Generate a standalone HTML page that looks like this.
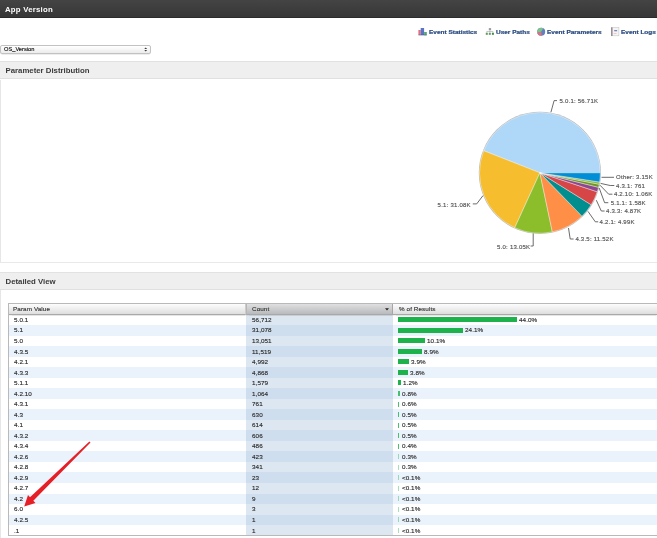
<!DOCTYPE html>
<html><head><meta charset="utf-8"><title>App Version</title>
<style>
html,body{margin:0;padding:0;background:#fff;}
body{width:657px;height:538px;position:relative;overflow:hidden;font-family:"Liberation Sans",sans-serif;color:#333;}
.abs{position:absolute;}
.hdr{position:absolute;left:0;top:0;width:657px;height:17.5px;background:linear-gradient(#444444,#373737);border-bottom:1px solid #2b2b2b;box-sizing:border-box;}
.hdr span{position:absolute;left:5px;top:4.6px;font-size:7.8px;font-weight:bold;color:#fff;letter-spacing:0.22px;line-height:10px;will-change:opacity;opacity:0.999;}
.lnk{position:absolute;top:28.15px;font-size:6.0px;font-weight:bold;color:#28497f;-webkit-text-stroke:0.22px #28497f;line-height:8px;white-space:nowrap;transform:scaleX(1.078);transform-origin:0 0;}
.sel{position:absolute;left:-0.2px;top:44.9px;width:150.9px;height:9.3px;border:0.6px solid #c2c2c2;border-radius:2px;box-sizing:border-box;background:linear-gradient(#ffffff,#ececec);box-shadow:0 0.5px 0.5px rgba(0,0,0,0.15);}
.sel span{position:absolute;left:3.2px;top:0.5px;font-size:5.7px;line-height:7px;color:#111;-webkit-text-stroke:0.15px #111;}
.ph{position:absolute;left:0;width:657px;background:#efefef;border-top:1px solid #e2e2e2;border-bottom:1px solid #e0e0e0;box-sizing:border-box;}
.ph span{position:absolute;left:5.5px;font-size:7.8px;font-weight:bold;color:#3a3a3a;line-height:10px;white-space:nowrap;}
.row{position:absolute;left:8.5px;width:649px;overflow:hidden;}
.sc{position:absolute;left:237.5px;top:0;width:146.5px;height:100%;}
.row span{position:absolute;top:2.45px;font-size:5.8px;line-height:7px;color:#2b2b2b;white-space:nowrap;-webkit-text-stroke:0.13px #2b2b2b;letter-spacing:0.05px;transform:scaleX(1.09);transform-origin:0 0;}
.c1{left:5.2px;}
.c2{left:243.2px;}
.c3{margin-left:-8.5px;}
.bar{position:absolute;left:389.5px;top:2.8px;height:5px;background:#1db24b;}
.th{position:absolute;top:303.3px;height:11.8px;z-index:2;box-sizing:border-box;border-bottom:1px solid #a9a9a9;border-top:1px solid #d8d8d8;box-shadow:0 0.8px 1px rgba(0,0,0,0.10);font-size:5.8px;color:#333;}
.th span{position:absolute;top:2.2px;line-height:7px;white-space:nowrap;-webkit-text-stroke:0.13px #333;letter-spacing:0.08px;transform:scaleX(1.09);transform-origin:0 0;}
#pg{position:absolute;left:0;top:0;width:657px;height:538px;will-change:opacity;opacity:0.999;}
</style></head><body><div id="pg">
<div class="hdr"><span>App Version</span></div>

<!-- links -->
<div class="lnk" style="left:428.7px">Event Statistics</div>
<div class="lnk" style="left:495.5px">User Paths</div>
<div class="lnk" style="left:547.3px">Event Parameters</div>
<div class="lnk" style="left:620.5px">Event Logs</div>
<svg class="abs" style="left:0;top:0" width="657" height="60" viewBox="0 0 657 60">
 <!-- chart icon -->
 <rect x="418.4" y="30" width="2.3" height="5" fill="#e2707c"/><rect x="420.7" y="28" width="3.4" height="7" fill="#5c74c4"/><rect x="424.1" y="32" width="2.7" height="3.2" fill="#58a67c"/><rect x="418.4" y="34.6" width="8.4" height="0.9" fill="#3a4a78" opacity="0.55"/>
 <!-- tree icon -->
 <rect x="488.8" y="28.1" width="2.3" height="2" fill="#9a9aa2"/><rect x="485.8" y="32.8" width="2" height="2" fill="#5c9c5c"/><rect x="488.8" y="32.8" width="2" height="2" fill="#5c9c5c"/><rect x="491.9" y="32.8" width="2" height="2" fill="#3f8a4a"/><path d="M489.9,30.1V32.8M486.8,32.8V31.4H492.9V32.8" stroke="#a0a0a4" stroke-width="0.6" fill="none"/>
 <!-- pie icon -->
 <circle cx="541.2" cy="31.8" r="4" fill="#6480bc"/><path d="M541.2,31.8 L543.2,28.3 A4,4 0 0 0 537.3,32.6 Z" fill="#7cc488"/><path d="M541.2,31.8 L537.3,32.6 A4,4 0 0 0 541.9,35.7 Z" fill="#d47480"/>
 <!-- log icon -->
 <rect x="611.3" y="27.6" width="7.6" height="8.2" fill="#f4f3f5" stroke="#c9c6c6" stroke-width="0.6"/><rect x="611" y="27.4" width="1.6" height="8.6" fill="#9a9091"/><rect x="614.2" y="30" width="2.9" height="1.3" fill="#7c86b4"/><rect x="613.7" y="33" width="2.8" height="0.9" fill="#efc4c8"/>
</svg>

<!-- select -->
<div class="sel"><span>OS_Version</span>
<svg class="abs" style="right:2px;top:1.6px" width="3.4" height="5" viewBox="0 0 4 6"><path d="M0.3,2.5 L2,0.5 L3.7,2.5 Z M0.3,3.5 L2,5.5 L3.7,3.5 Z" fill="#3a3a3a"/></svg></div>

<!-- panel 1 -->
<div class="ph" style="top:61.2px;height:18.2px"><span style="top:3.9px">Parameter Distribution</span></div>
<div class="abs" style="left:0;top:79.5px;width:657px;height:183px;border-left:1px solid #e6e6e6;border-bottom:1px solid #e9e9e9;box-sizing:border-box;"></div>

<svg class="abs" style="left:0;top:0" width="657" height="270" viewBox="0 0 657 270" font-family="Liberation Sans, sans-serif">
<circle cx="539.9" cy="172.8" r="61.1" fill="#b5b5b5"/>
<path d="M539.9,172.8 L600.30,172.80 A60.4,60.4 0 0 0 483.69,150.71 Z" fill="#AFD8F8" stroke="#ffffff" stroke-width="0.5" stroke-opacity="0.8"/>
<path d="M539.9,172.8 L483.69,150.71 A60.4,60.4 0 0 0 514.78,227.73 Z" fill="#F6BE2E" stroke="#ffffff" stroke-width="0.5" stroke-opacity="0.8"/>
<path d="M539.9,172.8 L514.78,227.73 A60.4,60.4 0 0 0 552.37,231.90 Z" fill="#8CBD2A" stroke="#ffffff" stroke-width="0.5" stroke-opacity="0.8"/>
<path d="M539.9,172.8 L552.37,231.90 A60.4,60.4 0 0 0 581.94,216.17 Z" fill="#FF8E46" stroke="#ffffff" stroke-width="0.5" stroke-opacity="0.8"/>
<path d="M539.9,172.8 L581.94,216.17 A60.4,60.4 0 0 0 591.16,204.75 Z" fill="#008E8E" stroke="#ffffff" stroke-width="0.5" stroke-opacity="0.8"/>
<path d="M539.9,172.8 L591.16,204.75 A60.4,60.4 0 0 0 597.24,191.79 Z" fill="#D64646" stroke="#ffffff" stroke-width="0.5" stroke-opacity="0.8"/>
<path d="M539.9,172.8 L597.24,191.79 A60.4,60.4 0 0 0 598.53,187.32 Z" fill="#8E468E" stroke="#ffffff" stroke-width="0.5" stroke-opacity="0.8"/>
<path d="M539.9,172.8 L598.53,187.32 A60.4,60.4 0 0 0 599.20,184.26 Z" fill="#6E9526" stroke="#ffffff" stroke-width="0.5" stroke-opacity="0.8"/>
<path d="M539.9,172.8 L599.20,184.26 A60.4,60.4 0 0 0 599.59,182.05 Z" fill="#8BBA3C" stroke="#ffffff" stroke-width="0.5" stroke-opacity="0.8"/>
<path d="M539.9,172.8 L599.59,182.05 A60.4,60.4 0 0 0 600.30,172.80 Z" fill="#008ED6" stroke="#ffffff" stroke-width="0.5" stroke-opacity="0.8"/>
<g fill="none" stroke="#5a5a5a" stroke-width="0.9">
<path d="M550.9,112.3 L554.1,100.6 H557"/>
<path d="M601.5,177.3 H614"/>
<path d="M600.6,183.4 L610.2,185.5 H614.3"/>
<path d="M600,185.2 L608.7,194.2 H612.4"/>
<path d="M599.2,188 L604.6,202.7 H608.3"/>
<path d="M596.3,200.2 L601.3,211 H604.6"/>
<path d="M588,211.4 L595.3,221.8 H598.2"/>
<path d="M568.5,228 L570.2,239 H573.6"/>
<path d="M533.2,233.4 V246 H530.6"/>
<path d="M483,195.6 L476.7,203.9 H472.8"/>
</g>
<g font-size="6.0" fill="#555" stroke="#555" stroke-width="0.15" letter-spacing="0.23">
<text x="559.5" y="102.8">5.0.1: 56.71K</text>
<text x="616.1" y="179.1">Other: 3.15K</text>
<text x="616.1" y="187.5">4.3.1: 761</text>
<text x="613.9" y="196.0">4.2.10: 1.06K</text>
<text x="610.7" y="204.8">5.1.1: 1.58K</text>
<text x="606.1" y="213.1">4.3.3: 4.87K</text>
<text x="599.6" y="223.9">4.2.1: 4.99K</text>
<text x="575.4" y="241.4">4.3.5: 11.52K</text>
<text x="530.3" y="249.0" text-anchor="end">5.0: 13.05K</text>
<text x="470.8" y="206.8" text-anchor="end">5.1: 31.08K</text>
</g>
</svg>

<!-- panel 2 -->
<div class="ph" style="top:272px;height:18px"><span style="top:3.9px">Detailed View</span></div>
<div class="abs" style="left:0;top:290px;width:1px;height:248px;background:#e6e6e6"></div>

<!-- table -->
<div class="th" style="left:8.5px;width:237.5px;background:linear-gradient(#fdfdfd,#dedede);border-right:1px solid #cfcfcf;"><span style="left:4.9px">Param Value</span></div>
<div class="th" style="left:246px;width:146.5px;background:linear-gradient(#dfdfe0,#b9babc);border-right:1px solid #a9a9a9;border-left:1px solid #b5b5b5;"><span style="left:4.6px">Count</span>
<svg class="abs" style="right:3px;top:4px" width="4" height="3" viewBox="0 0 4 3"><path d="M0,0.3 H4 L2,2.6 Z" fill="#222"/></svg></div>
<div class="th" style="left:392.5px;width:264.5px;background:linear-gradient(#fdfdfd,#dedede);"><span style="left:6px">% of Results</span></div>
<div class="row" style="top:314.50px;height:10.58px;background:#ffffff"><div class="sc" style="background:#dde7f2"></div><span class="c1">5.0.1</span><span class="c2">56,712</span>
<div class="bar" style="width:118.6px;opacity:1"></div><span class="c3" style="left:518.6px">44.0%</span></div>
<div class="row" style="top:325.03px;height:10.58px;background:#eaf2fb"><div class="sc" style="background:#cfdeee"></div><span class="c1">5.1</span><span class="c2">31,078</span>
<div class="bar" style="width:64.9px;opacity:1"></div><span class="c3" style="left:464.9px">24.1%</span></div>
<div class="row" style="top:335.56px;height:10.58px;background:#ffffff"><div class="sc" style="background:#dde7f2"></div><span class="c1">5.0</span><span class="c2">13,051</span>
<div class="bar" style="width:27.2px;opacity:1"></div><span class="c3" style="left:427.2px">10.1%</span></div>
<div class="row" style="top:346.09px;height:10.58px;background:#eaf2fb"><div class="sc" style="background:#cfdeee"></div><span class="c1">4.3.5</span><span class="c2">11,519</span>
<div class="bar" style="width:24.0px;opacity:1"></div><span class="c3" style="left:424.0px">8.9%</span></div>
<div class="row" style="top:356.62px;height:10.58px;background:#ffffff"><div class="sc" style="background:#dde7f2"></div><span class="c1">4.2.1</span><span class="c2">4,992</span>
<div class="bar" style="width:10.5px;opacity:1"></div><span class="c3" style="left:410.5px">3.9%</span></div>
<div class="row" style="top:367.15px;height:10.58px;background:#eaf2fb"><div class="sc" style="background:#cfdeee"></div><span class="c1">4.3.3</span><span class="c2">4,868</span>
<div class="bar" style="width:10.2px;opacity:1"></div><span class="c3" style="left:410.2px">3.8%</span></div>
<div class="row" style="top:377.68px;height:10.58px;background:#ffffff"><div class="sc" style="background:#dde7f2"></div><span class="c1">5.1.1</span><span class="c2">1,579</span>
<div class="bar" style="width:3.2px;opacity:1"></div><span class="c3" style="left:403.2px">1.2%</span></div>
<div class="row" style="top:388.21px;height:10.58px;background:#eaf2fb"><div class="sc" style="background:#cfdeee"></div><span class="c1">4.2.10</span><span class="c2">1,064</span>
<div class="bar" style="width:1.7px;opacity:0.8"></div><span class="c3" style="left:402.3px">0.8%</span></div>
<div class="row" style="top:398.74px;height:10.58px;background:#ffffff"><div class="sc" style="background:#dde7f2"></div><span class="c1">4.3.1</span><span class="c2">761</span>
<div class="bar" style="width:1.3px;opacity:0.8"></div><span class="c3" style="left:401.9px">0.6%</span></div>
<div class="row" style="top:409.27px;height:10.58px;background:#eaf2fb"><div class="sc" style="background:#cfdeee"></div><span class="c1">4.3</span><span class="c2">630</span>
<div class="bar" style="width:1.1px;opacity:0.8"></div><span class="c3" style="left:401.7px">0.5%</span></div>
<div class="row" style="top:419.80px;height:10.58px;background:#ffffff"><div class="sc" style="background:#dde7f2"></div><span class="c1">4.1</span><span class="c2">614</span>
<div class="bar" style="width:1.1px;opacity:0.8"></div><span class="c3" style="left:401.7px">0.5%</span></div>
<div class="row" style="top:430.33px;height:10.58px;background:#eaf2fb"><div class="sc" style="background:#cfdeee"></div><span class="c1">4.3.2</span><span class="c2">606</span>
<div class="bar" style="width:1.1px;opacity:0.8"></div><span class="c3" style="left:401.7px">0.5%</span></div>
<div class="row" style="top:440.86px;height:10.58px;background:#ffffff"><div class="sc" style="background:#dde7f2"></div><span class="c1">4.3.4</span><span class="c2">486</span>
<div class="bar" style="width:0.9px;opacity:0.8"></div><span class="c3" style="left:401.5px">0.4%</span></div>
<div class="row" style="top:451.39px;height:10.58px;background:#eaf2fb"><div class="sc" style="background:#cfdeee"></div><span class="c1">4.2.6</span><span class="c2">423</span>
<div class="bar" style="width:0.9px;opacity:0.4"></div><span class="c3" style="left:401.5px">0.3%</span></div>
<div class="row" style="top:461.92px;height:10.58px;background:#ffffff"><div class="sc" style="background:#dde7f2"></div><span class="c1">4.2.8</span><span class="c2">341</span>
<div class="bar" style="width:0.9px;opacity:0.4"></div><span class="c3" style="left:401.5px">0.3%</span></div>
<div class="row" style="top:472.45px;height:10.58px;background:#eaf2fb"><div class="sc" style="background:#cfdeee"></div><span class="c1">4.2.9</span><span class="c2">23</span>
<div class="bar" style="width:0.9px;opacity:0.4"></div><span class="c3" style="left:401.5px">&lt;0.1%</span></div>
<div class="row" style="top:482.98px;height:10.58px;background:#ffffff"><div class="sc" style="background:#dde7f2"></div><span class="c1">4.2.7</span><span class="c2">12</span>
<div class="bar" style="width:0.9px;opacity:0.4"></div><span class="c3" style="left:401.5px">&lt;0.1%</span></div>
<div class="row" style="top:493.51px;height:10.58px;background:#eaf2fb"><div class="sc" style="background:#cfdeee"></div><span class="c1">4.2</span><span class="c2">9</span>
<div class="bar" style="width:0.9px;opacity:0.4"></div><span class="c3" style="left:401.5px">&lt;0.1%</span></div>
<div class="row" style="top:504.04px;height:10.58px;background:#ffffff"><div class="sc" style="background:#dde7f2"></div><span class="c1">6.0</span><span class="c2">3</span>
<div class="bar" style="width:0.9px;opacity:0.4"></div><span class="c3" style="left:401.5px">&lt;0.1%</span></div>
<div class="row" style="top:514.57px;height:10.58px;background:#eaf2fb"><div class="sc" style="background:#cfdeee"></div><span class="c1">4.2.5</span><span class="c2">1</span>
<div class="bar" style="width:0.9px;opacity:0.4"></div><span class="c3" style="left:401.5px">&lt;0.1%</span></div>
<div class="row" style="top:525.10px;height:10.58px;background:#ffffff"><div class="sc" style="background:#dde7f2"></div><span class="c1">.1</span><span class="c2">1</span>
<div class="bar" style="width:0.9px;opacity:0.4"></div><span class="c3" style="left:401.5px">&lt;0.1%</span></div>
<div class="abs" style="left:7.5px;top:302.8px;width:650px;height:233.4px;border:1px solid #b9b9b9;border-right:none;box-sizing:border-box;z-index:3;pointer-events:none"></div>
<!-- arrow -->
<svg class="abs" style="left:0;top:430px" width="120" height="90" viewBox="0 430 120 90">
<path d="M90.5,442.4 L89.4,441.5 L30,497.3 L28,495.1 L24.2,506.4 L35.5,503 L33.3,500.7 Z" fill="#e61e26"/>
</svg>
</div></body></html>
